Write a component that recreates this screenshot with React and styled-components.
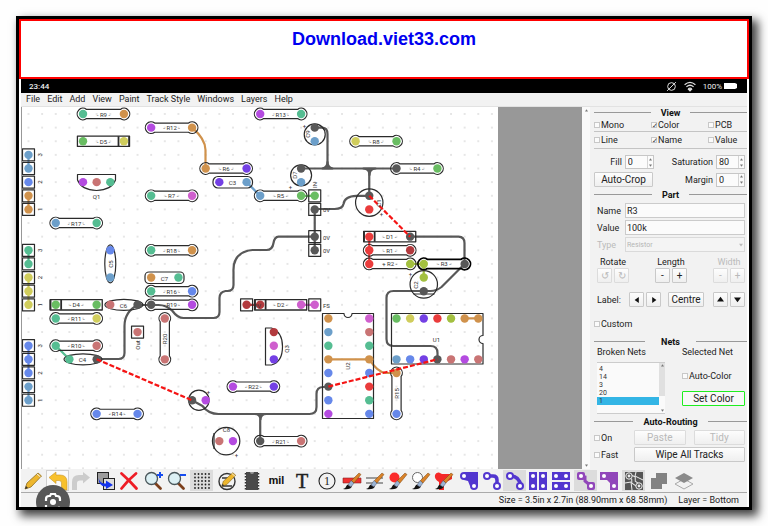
import React from "react";
import styled, { createGlobalStyle, css } from "styled-components";

const Global = createGlobalStyle`
  * { box-sizing: border-box; }
  body { margin: 0; background: #fefefe; font-family: Roboto, "Liberation Sans", sans-serif; color: #222; }
  button, input, select { font-family: inherit; color: inherit; }
`;

/* ---------- page frame ---------- */
const Page = styled.div`padding: 16px;`;
const Frame = styled.div`
  border: 3px solid #000;
  background: #fff;
  box-shadow: 5px 5px 9px 1px rgba(0, 0, 0, 0.75);
`;
const Banner = styled.header`
  height: 60px;
  padding-top: 7px;
  border: 2px solid #f00;
  text-align: center;
`;
const Title = styled.h1`
  margin: 0;
  font: bold 18px/22px "Liberation Sans", Arial, sans-serif;
  color: #0000f0;
`;
const Screen = styled.main`
  position: relative;
  overflow: hidden;
  margin: 0 2px;
  background: #f2f2f2;
`;
const StatusBar = styled.div`
  display: flex;
  align-items: center;
  gap: 7px;
  height: 14px;
  padding: 0 10px 0 8px;
  background: #000;
  color: #eee;
  font-size: 8px;
  font-weight: 500;
`;
const Clock = styled.span`margin-right: auto;`;
const Battery = styled.span`
  display: flex;
  align-items: center;
  gap: 2px;
  font-weight: 400;
`;
const MenuBar = styled.nav`
  display: flex;
  align-items: center;
  gap: 7px;
  height: 14px;
  padding: 0 5px;
  border-bottom: 1px solid #e2e2e2;
`;
const MenuItem = styled.button`
  padding: 0;
  border: 0;
  background: none;
  font-size: 9px;
  line-height: 13px;
`;
const Workspace = styled.div`
  display: grid;
  grid-template-columns: minmax(0, 1fr) 8px 157px;
`;
const BoardArea = styled.section`
  display: flex;
  overflow: hidden;
  padding-left: 1px;
  background: #989898;
`;
const Board = styled.svg`
  flex: none;
  display: block;
  background: #fff;
`;
const ScrollTrack = styled.div`
  display: flex;
  flex-direction: column;
  justify-content: space-between;
  align-items: center;
  padding: 2px 0;
  background: #fafafa;
`;

/* ---------- side panel ---------- */
const Panel = styled.aside`
  padding: 0 0 7px 4px;
  font-size: 9px;
`;
const Heading = styled.h2`
  display: flex;
  align-items: center;
  gap: ${(p) => p.$gap || 10}px;
  height: 11px;
  margin: 0;
  font-size: 9px;
  font-weight: 700;
  color: #111;
  &::before, &::after { content: ""; flex: 1; border-top: 1px solid #999; }
`;
const CheckRow = styled.div`
  display: grid;
  grid-template-columns: 57px 57px 1fr;
  align-items: center;
  height: ${(p) => p.$h}px;
  border-bottom: 1px solid #c4c4c4;
`;
const CheckLabel = styled.label`
  display: flex;
  align-items: center;
  gap: 1px;
  line-height: 12px;
`;
const CheckBox = styled.input.attrs({ type: "checkbox" })`
  appearance: none;
  display: grid;
  place-items: center;
  width: 6px;
  height: 6px;
  margin: 0;
  border: 1px solid #c8c8c8;
  background: #fbfbfb;
  &:checked::after { content: "✓"; font: bold 7px/6px "DejaVu Sans", sans-serif; color: #333; }
`;
const Row = styled.div`
  display: flex;
  align-items: center;
  justify-content: ${(p) => p.$justify || "space-between"};
  gap: ${(p) => p.$gap || 0}px;
  margin-top: ${(p) => p.$top || 0}px;
  padding-right: 2px;
`;
const SpinLabel = styled.label`
  display: flex;
  align-items: center;
  gap: 3px;
`;
const SpinBox = styled.span`
  display: flex;
  width: 29px;
  height: 14px;
  border: 1px solid #c6c6c6;
  background: #fbfbfb;
`;
const SpinInput = styled.input`
  flex: 1;
  min-width: 0;
  padding: 0 2px;
  border: 0;
  background: none;
  font-size: 9px;
`;
const SpinArrows = styled.span`
  display: flex;
  flex-direction: column;
  justify-content: space-around;
  align-items: center;
  width: 6px;
  border-left: 1px solid #d5d5d5;
`;
const Button = styled.button`
  display: grid;
  place-items: center;
  height: 15px;
  width: ${(p) => p.$w}px;
  padding: 0;
  border: 1px solid #c9c9c9;
  border-radius: 1px;
  background: linear-gradient(#fdfdfd, #efefef);
  font-size: 10px;
  line-height: 12px;
  color: #222;
  &:disabled { color: #b9b9b9; border-color: #dcdcdc; }
  ${(p) => p.$net && css`border-color: #1fee1f; background: #f8f8f8;`}
`;
const Field = styled.label`
  display: grid;
  grid-template-columns: 28px 1fr;
  align-items: center;
  margin-top: ${(p) => p.$top || 2}px;
  padding: 0 2px 0 3px;
  color: ${(p) => (p.$off ? "#bbb" : "inherit")};
`;
const fieldBox = css`
  width: 100%;
  height: 15px;
  padding: 0 1px;
  border: 1px solid #cbcbcb;
  background: #fbfbfb;
`;
const TextInput = styled.input`${fieldBox} font-size: 9px;`;
const SelectBox = styled.span`
  ${fieldBox}
  display: flex;
  align-items: center;
  background: #f4f4f4;
  border-color: #dadada;
`;
const TypeSelect = styled.select`
  appearance: none;
  flex: 1;
  border: 0;
  background: none;
  font-size: 7px;
  opacity: 1;
  &:disabled { color: #b5b5b5; opacity: 1; }
`;
const ToolGroups = styled.div`
  display: grid;
  grid-template-columns: 32px 32px 32px;
  justify-content: space-between;
  margin-top: 5px;
  padding: 0 2px 0 3px;
`;
const PairGroup = styled.div`
  display: grid;
  grid-template-columns: 15px 15px;
  column-gap: 2px;
  text-align: center;
  color: ${(p) => (p.$off ? "#bbb" : "inherit")};
`;
const PairTitle = styled.span`
  grid-column: 1 / -1;
  height: 11px;
  line-height: 11px;
`;
const LabelText = styled.span`flex: 1; padding-left: 3px;`;
const ButtonPair = styled.span`display: flex; gap: 2px; margin-right: ${(p) => p.$mr || 0}px;`;
const Spacer = styled.div`height: ${(p) => p.$h}px;`;
const NetsGrid = styled.div`
  display: grid;
  grid-template-columns: 68px 63px;
  justify-content: space-between;
  padding: 0 2px 0 3px;
`;
const NetTitle = styled.label`
  display: block;
  height: 11px;
  line-height: 11px;
  white-space: nowrap;
`;
const ListFrame = styled.div`
  display: flex;
  height: 52px;
  margin-top: 4px;
  border-top: 1px solid #ccc;
  border-bottom: 1px solid #ccc;
  background: #fafafa;
`;
const NetList = styled.select`
  appearance: none;
  flex: 1;
  min-width: 0;
  height: 50px;
  padding: 2px 0 0;
  border: 0;
  outline: 0;
  overflow: hidden;
  background: none;
  font-size: 7px;
  & option { min-height: 8px; padding: 0 2px; font-size: 7px; line-height: 8px; color: #333; }
  & option:checked { background: linear-gradient(#33b5e5, #33b5e5); }
`;
const ListScroll = styled.div`
  display: flex;
  flex-direction: column;
  justify-content: space-between;
  align-items: center;
  width: 6px;
  padding: 1px 0;
  background: linear-gradient(#e0e0e0 66%, #fafafa 66%);
`;
const NetActions = styled.div`
  display: flex;
  flex-direction: column;
  gap: 9px;
  padding-top: 12px;
`;
const RouteGrid = styled.div`
  display: grid;
  grid-template-columns: 40px 1fr 1fr;
  align-items: center;
  row-gap: 2px;
  margin-top: 3px;
  padding-right: 2px;
  & > button:nth-of-type(1) { margin-right: 4px; }
  & > button:nth-of-type(2) { margin-left: 4px; }
  & > button:nth-of-type(3) { grid-column: span 2; }
`;

/* ---------- bottom bars ---------- */
const Toolbar = styled.div`
  display: flex;
  gap: 2px;
  padding: 1px 0;
  border-bottom: 1px solid #aaa;
`;
const ToolSet = styled.div`display: flex;`;
const Tool = styled.button`
  display: grid;
  place-items: center;
  width: 23px;
  height: 21px;
  padding: 0;
  border: 0;
  background: ${(p) => (p.$on ? "#dcdcdc" : "none")};
  font-size: 11px;
  font-weight: 700;
  color: #111;
  ${(p) => p.$hover && css`background: #fafafa; box-shadow: inset 0 0 0 1px #d0d0d0;`}
`;
const Footer = styled.footer`
  display: flex;
  justify-content: flex-end;
  align-items: center;
  gap: 11px;
  height: 14px;
  padding-right: 8px;
  font-size: 9px;
`;
const LensButton = styled.button`
  position: absolute;
  left: 15px;
  bottom: -12px;
  display: grid;
  place-items: center;
  width: 34px;
  height: 34px;
  padding: 0;
  border: 0;
  border-radius: 50%;
  background: #575757;
`;

/* ---------- board drawing ---------- */
const PITCH = 13.63;
const C = {
  g: "#55bd92", o: "#d0924c", p: "#b44be0", l: "#69bd62", y: "#d0cd5c", b: "#6c9fca",
  u: "#6688ea", r: "#c97474", m: "#cf5fce", k: "#585858", v: "#7440e4", R: "#ea3c3c",
  d: "#b23a3e", e: "#a3c040",
};
const X = (i) => i * PITCH;
const LINE = "#2b2b2b";

const Pad = ({ i, j, c }) => <circle cx={X(i)} cy={X(j)} r="4.2" fill={C[c]} />;
const Tag = ({ x, y, children, turn }) => (
  <text x={x} y={y} fontSize="6" fill="#333" textAnchor="middle" dominantBaseline="central"
    transform={turn ? `rotate(-90 ${x} ${y})` : undefined}>{children}</text>
);
const Pill = ({ i, j, name, a, b, up, bold }) => {
  const w = X(3);
  return (
    <g>
      <g transform={`translate(${X(i)} ${X(j)})${up ? " rotate(90)" : ""}`}>
        <path d={`M3.5-4.6H${w - 3.5}A5.8 5.8 0 1 1 ${w - 3.5} 4.6H3.5A5.8 5.8 0 1 1 3.5-4.6Z`}
          fill="none" stroke={bold ? "#000" : LINE} strokeWidth={bold ? 1.8 : 1.2} />
        <circle r="4.2" fill={C[a]} />
        <circle cx={w} r="4.2" fill={C[b]} />
      </g>
      {up ? <Tag x={X(i)} y={X(j) + w / 2} turn>{name}</Tag>
        : <Tag x={X(i) + w / 2} y={X(j)}>{`${name === "R2" ? "+" : "-"} ${name} -`}</Tag>}
    </g>
  );
};
const Diode = ({ i, j, name, a, b, right }) => (
  <g stroke={LINE} fill="none">
    <rect x={X(i) - 5.6} y={X(j) - 5.2} width={X(3) + 11.2} height="10.4" strokeWidth="1.3" />
    <path d={right ? `M${X(i + 3) - 5.4} ${X(j) - 5}v10M${X(i + 3) + 5.2} ${X(j) - 5}v10`
      : `M${X(i) + 5.4} ${X(j) - 5}v10M${X(i) - 5.2} ${X(j) - 5}v10`} strokeWidth="1.8" />
    <g stroke="none">
      <Pad i={i} j={j} c={a} /><Pad i={i + 3} j={j} c={b} />
      <Tag x={X(i + 1.5)} y={X(j)}>{`- ${name} -`}</Tag>
    </g>
  </g>
);
const SquarePad = ({ i, j, c }) => (
  <g>
    <rect x={X(i) - 6} y={X(j) - 6} width="12" height="12" fill="none" stroke={LINE} strokeWidth="1.2" />
    <Pad i={i} j={j} c={c} />
  </g>
);
const Header5 = ({ j, colors }) => (
  <g>
    {colors.split("").map((c, n) => <SquarePad key={n} i={0} j={j + n} c={c} />)}
    {["3", "2", "1"].map((t, n) => <Tag key={t} x={11} y={X(j + n * 2)} turn>{t}</Tag>)}
  </g>
);

const PILLS = [
  [4, 0, "R9", "g", "o"], [9, 1, "R12", "p", "o"], [9, 6, "R7", "g", "m"], [2, 8, "R17", "b", "g"],
  [17, 0, "R13", "p", "g"], [24, 2, "R8", "y", "l"], [13, 4, "R6", "o", "v"], [17, 6, "R5", "b", "l"],
  [27, 4, "R4", "k", "l"], [9, 10, "R18", "g", "o"], [9, 13, "R16", "g", "u"], [9, 14, "R19", "k", "p"],
  [2, 15, "R11", "g", "y"], [2, 17, "R10", "g", "r"], [5, 22, "R14", "u", "u"], [15, 20, "R22", "p", "v"],
  [17, 24, "R21", "k", "r"], [25, 10, "R1", "R", "d"], [25, 11, "R2", "R", "e"],
];
const CIRCLES = [[21, 1.5, 10.5], [20, 4.5, 10.5], [25, 6.5, 13.7], [29, 12.5, 13.7], [12.5, 21, 10.2], [14.5, 24, 13.7]];
const LOOSE_PADS = [
  [4, 5, "p"], [5, 5, "r"], [6, 5, "g"], [21, 1, "k"], [21, 2, "b"], [20, 4, "k"], [20, 5, "b"], [14, 5, "v"],
  [16, 5, "b"], [25, 6, "k"], [25, 7, "R"], [6, 10, "u"], [6, 12, "b"], [9, 12, "o"], [11, 12, "g"],
  [6, 14, "r"], [8, 14, "k"], [3, 18, "g"], [5, 18, "k"], [12, 21, "k"], [13, 21, "p"], [14, 24, "r"],
  [15, 24, "p"], [29, 12, "e"], [29, 13, "k"], [18, 16, "d"], [18, 17, "m"], [18, 18, "v"],
];
const SQUARES = [[21, 6, "l"], [21, 7, "k"], [21, 9, "k"], [21, 10, "k"], [8, 16, "r"], [16, 14, "d"], [21, 14, "m"]];
const P = (i, j) => `${X(i)} ${X(j)}`;
const TRACKS = [
  ["k", `M${P(21, 1)}H294Q299 14 299 20V${X(4)}M${P(20, 4)}H${X(27)}M${P(25, 4)}V${X(6)}H328Q316 82 315 90Q314 95 306 95H${X(21)}V${X(10)}`],
  ["k", `M294 54.500Q299 53 299 48Q299 53 304 54.500ZM335 54.500Q341 55 341 61Q341 55 347 54.500Z`],
  ["k", `M${P(21, 9)}H250Q246 123 245 129Q244 136 238 136H224Q204 138 205 158V171Q205 177 199 177H197Q191 178 191 184V198Q191 204 185 204H155Q149 204 144 197Q138 191 130 191H${X(8)}Q96 198 96 212V239Q96 245 90 245H${X(5)}`],
  ["k", `M${P(28, 9)}H430Q436 123 436 129V${X(11)}L413 173Q408 177 402 177H365Q358 177 358 184V225Q358 232 365 232H402Q409 232 409 239V${X(18)}`],
  ["k", `M${P(12, 21)}L174 292Q180 300 190 300H281Q288 300 288 293V280Q288 273 295 273H${X(22)}M${P(17, 24)}V300M226 300Q232 300 232 306Q232 300 238 300Z`],
  ["o", `M${P(12, 1)}Q177 25 177 36V${X(4)}M${P(22, 18)}H${X(25)}Q349 258 357 259H${X(27)}M${P(32, 15)}H${X(33)}`],
  ["b", `M${P(16, 5)}L${P(17, 6)}M${P(0, 3)}V${X(4)}`],
  ["l", `M${P(20, 6)}H${X(21)}`],
  ["o", `M${P(0, 6)}V${X(7)}`],
  ["g", `M${P(2, 17)}L${P(3, 18)}M${P(0, 10)}V${X(11)}`],
  ["y", `M${P(0, 12)}V${X(14)}`],
  ["u", `M${P(0, 17)}V${X(19)}`],
  ["b", `M${P(0, 20)}V${X(21)}`],
  ["e", `M${P(28, 11)}H${X(29)}V${X(12)}`],
  ["R", `M${P(25, 9)}V${X(11)}`],
  ["m", `M${P(20, 14)}H${X(21)}`],
  ["d", `M${P(16, 14)}H${X(17)}`],
];

const Circuit = () => (
  <Board width="476" height="362" viewBox="0 0 476 362" role="img" aria-label="Circuit board">
    <defs>
      <pattern id="dots" width={PITCH} height={PITCH} patternUnits="userSpaceOnUse" x="-1" y="-1">
        <circle cx="1" cy="1" r="0.7" fill="#bdbdbd" />
      </pattern>
    </defs>
    <g transform="translate(6.5 7)" strokeLinejoin="round">
      <rect x="-3" y="-3" width="472" height="358" fill="url(#dots)" />
      {TRACKS.map(([c, d], n) => <path key={n} d={d} fill="none" stroke={C[c]} strokeWidth="2.2" strokeLinecap="round" />)}
      {PILLS.map(([i, j, name, a, b]) => <Pill key={name} i={i} j={j} name={name} a={a} b={b} />)}
      <Pill i={29} j={11} name="R3" a="e" b="k" bold />
      <Pill i={10} j={15} name="R20" a="r" b="r" up />
      <Pill i={27} j={19} name="R15" a="o" b="u" up />
      <Diode i={4} j={2} name="D5" a="l" b="y" right />
      <Diode i={2} j={14} name="D4" a="l" b="l" />
      <Diode i={25} j={9} name="D1" a="R" b="k" />
      <Diode i={17} j={14} name="D2" a="d" b="m" />
      <Header5 j={3} colors="bbuoo" />
      <Header5 j={10} colors="ggyyy" />
      <Header5 j={17} colors="uuubb" />
      <g fill="none" stroke={LINE} strokeWidth="1.2">
        {CIRCLES.map(([i, j, r]) => <circle key={`${i}-${j}`} cx={X(i)} cy={X(j)} r={r} />)}
        <path d="M49 60.500H87V66Q83 76 68 76.500Q53 76 49 66Z" />
        <path d="M237 214H243Q254 218 254 232.500Q254 248 243 251H237Z" />
        <rect x="184.500" y="62.500" width="39.500" height="11.500" rx="5" />
        <rect x="116.500" y="158" width="39" height="11.500" rx="4" />
        <ellipse cx={X(6)} cy={X(11)} rx="5.500" ry="19" />
        <ellipse cx={X(7)} cy={X(14)} rx="19" ry="5.500" />
        <ellipse cx={X(4)} cy={X(18)} rx="19" ry="5.500" />
        <path d="M294 199.500H315.500A4 4 0 0 0 323.500 199.500H345V304.500H294Z" />
        <path d="M363 199.500H454.500V221.500A4 4 0 0 0 454.500 229.500V250H363Z" />
        <path d="M385 180H406M185.500 319V335" />
      </g>
      {SQUARES.map(([i, j, c]) => <SquarePad key={`${i}-${j}`} i={i} j={j} c={c} />)}
      {LOOSE_PADS.map(([i, j, c]) => <Pad key={`${i}-${j}`} i={i} j={j} c={c} />)}
      {"obgoukup".split("").map((c, n) => <Pad key={n} i={22} j={15 + n} c={c} />)}
      {"mrgouRgu".split("").map((c, n) => <Pad key={n} i={25} j={15 + n} c={c} />)}
      {"lyvReoo".split("").map((c, n) => <Pad key={n} i={27 + n} j={15} c={c} />)}
      {"buvkrpr".split("").map((c, n) => <Pad key={n} i={27 + n} j={18} c={c} />)}
      <path d={`M${P(25, 6)}L${P(28, 9)}M${P(5, 18)}L${P(12, 21)}M${P(22, 20)}L${P(30, 18)}`}
        stroke="#f51414" strokeWidth="2.200" strokeDasharray="5 2" fill="none" />
      <Tag x={68} y={82}>Q1</Tag>
      <Tag x={204} y={68}>C3</Tag>
      <Tag x={136} y={164}>C7</Tag>
      <Tag x={95} y={191}>C6</Tag>
      <Tag x={54} y={245}>C4</Tag>
      <Tag x={198} y={315}>C8</Tag>
      <Tag x={408} y={225}>U1</Tag>
      <Tag x={298} y={95}>0V</Tag>
      <Tag x={298} y={123}>0V</Tag>
      <Tag x={298} y={136}>0V</Tag>
      <Tag x={298} y={191}>FS</Tag>
      <Tag x={229} y={191}>9V</Tag>
      <Tag x={82} y={150} turn>C5</Tag>
      <Tag x={109} y={231} turn>Out</Tag>
      <Tag x={258} y={235} turn>Q3</Tag>
      <Tag x={319} y={252} turn>U2</Tag>
      <Tag x={387} y={171} turn>C2</Tag>
      <Tag x={279} y={20} turn>C9</Tag>
      <Tag x={266} y={61} turn>D7</Tag>
      <Tag x={286} y={71} turn>IN</Tag>
      <Tag x={350} y={89} turn>C1</Tag>
      <Tag x={276} y={11}>+</Tag><Tag x={262} y={72}>+</Tag><Tag x={353} y={99}>+</Tag>
      <Tag x={382} y={159}>+</Tag><Tag x={180} y={277}>+</Tag><Tag x={208} y={340}>+</Tag>
    </g>
  </Board>
);

/* ---------- icons ---------- */
const Svg = ({ children, size = 20 }) => (
  <svg width={size} height={size} viewBox="0 0 20 20" fill="none" aria-hidden="true">{children}</svg>
);
const Tri = ({ dir, size = 5, color = "#777" }) => {
  const d = { up: "M0 8L5 1L10 8Z", down: "M0 2L5 9L10 2Z", left: "M8 0L1 5L8 10Z", right: "M2 0L9 5L2 10Z" }[dir];
  return <svg width={size} height={size} viewBox="0 0 10 10" aria-hidden="true"><path d={d} fill={color} /></svg>;
};
const Brush = () => (
  <g>
    <path d="M1 18Q4 17 5 14Q9 12 10 15Q9 19 1 18Z" fill="#111" />
    <path d="M6 14L9 9.500L12 12L9 16Z" fill="#9ab4d4" stroke="#556" strokeWidth=".5" />
    <path d="M9.500 9.500L17 2L19 3.500L12 12Z" fill="#d98228" stroke="#7a4510" strokeWidth=".5" />
  </g>
);
const Pencil = () => (
  <g>
    <path d="M2 18L4 12L15 2L18.500 5L8 16Z" fill="#edb62e" stroke="#8e6d20" strokeWidth=".8" />
    <path d="M2 18L3 15L5 17Z" fill="#333" />
    <path d="M14 3L17.500 6" stroke="#eee" />
  </g>
);
const Lens = ({ plus }) => (
  <g>
    <path d="M10.500 11.500L16.500 17.500" stroke="#7c3f1c" strokeWidth="2.800" strokeLinecap="round" />
    <circle cx="7.500" cy="7.500" r="6" fill="#dcf0f4" stroke="#49565a" strokeWidth="1.300" />
    <path d={plus ? "M13 4H19M16 1V7" : "M13 4H19"} stroke="#164cf0" strokeWidth="2" />
  </g>
);
const Holes = ({ pts }) => pts.map(([x, y]) => <circle key={`${x}-${y}`} cx={x} cy={y} r="2" fill="#fff" />);
const V = "#5236cf";
const M = "#9146ba";
const DOT_STEPS = [3, 6.5, 10, 13.5, 17];

const ICONS = {
  pencil: <Pencil />,
  undo: <path d="M1 6.500L8 1V4H12Q19 4 19 11V19H13.500V12Q13.500 9.500 11 9.500H8V12.500Z" fill="#f8c12c" stroke="#c8962a" strokeWidth=".6" />,
  redo: <path d="M19 6.500L12 1V4H8Q1 4 1 11V19H6V12Q6 9.500 9 9.500H12V12.500Z" fill="#ccc" />,
  copy: <g stroke="#222"><rect x="1.500" y="1.500" width="11" height="11" fill="#9d9d9d" /><rect x="7.500" y="7.500" width="11" height="11" fill="#ddd" /><path d="M2.500 7Q4 13 10 12.500V9.500L17 14L10 18V15.500Q3 16 2.500 7Z" fill="#1434ee" stroke="none" /></g>,
  cross: <path d="M2.500 2.500Q10 9 17.500 17.500M17 2.500Q9 9 2.500 17.500" stroke="#ee1c25" strokeWidth="2.800" strokeLinecap="round" />,
  zoomin: <Lens plus />,
  zoomout: <Lens />,
  grid: <g fill="#222">{DOT_STEPS.map((y) => DOT_STEPS.map((x) => <circle key={`${x}-${y}`} cx={x} cy={y} r=".9" />))}</g>,
  netlist: <g><circle cx="10" cy="10.500" r="8" stroke="#333" strokeWidth="1.400" /><path d="M5 7H14L6 15H15" stroke="#333" strokeWidth="1.300" /><g transform="translate(3 0) scale(.85)"><Pencil /></g></g>,
  chip: <g><rect x="4" y="1" width="12" height="18" fill="#4a4a4a" /><path d="M3.500 2V19M16.500 2V19" stroke="#333" strokeWidth="1.500" strokeDasharray="1.500 1.500" /><path d="M8 1A2 2 0 0 0 12 1" fill="#999" /></g>,
  text: <text x="10" y="16.500" fontSize="20" fontWeight="400" textAnchor="middle" fill="#222" stroke="#222" strokeWidth=".5" fontFamily="Liberation Serif, serif">T</text>,
  one: <g><circle cx="10" cy="10" r="8" stroke="#222" strokeWidth="1.100" /><text x="10" y="14" fontSize="12" fontWeight="400" textAnchor="middle" fill="#222" fontFamily="Liberation Serif, serif">1</text></g>,
  brushTrack: <g><path d="M1 7H19V12H1Z" fill="#f03030" stroke="#822" strokeWidth=".6" /><Brush /></g>,
  brushLine: <g><path d="M1 7H18M1 12H18" stroke="#444" /><Brush /></g>,
  brushPad: <g><circle cx="6.500" cy="6.500" r="5" fill="#fb2b2b" /><Brush /></g>,
  brushClear: <g><circle cx="6.500" cy="6.500" r="5" fill="#fff" stroke="#666" /><Brush /></g>,
  brushFill: <g><path d="M1 4Q2 1 5 1.500L8 3H18V8L10 12V19H5V11Q0 8 1 4Z" fill="#f42828" /><Brush /></g>,
  fillA: <g><path d="M5 1H19V15A4 4 0 0 1 11 15L9 10L5 9A4 4 0 0 1 5 1Z" fill={V} /><Holes pts={[[5, 5], [15, 15]]} /></g>,
  routeA: <g><path d="M4 5H11Q15 5 15 9V15" stroke={V} strokeWidth="3.500" /><circle cx="5" cy="5" r="4" fill={V} /><circle cx="15" cy="15" r="4" fill={V} /><Holes pts={[[5, 5], [15, 15]]} /></g>,
  routeB: <g><path d="M4 5Q14 4 16 15" stroke={V} strokeWidth="3.500" /><circle cx="5" cy="5" r="4" fill={V} /><circle cx="15" cy="15" r="4" fill={V} /><Holes pts={[[5, 5], [15, 15]]} /></g>,
  vert: <g><path d="M1 1H9V19H1ZM11 1H19V19H11Z" fill={V} /><Holes pts={[[5, 5], [5, 15], [15, 5], [15, 15]]} /></g>,
  horiz: <g><path d="M1 1H19V9H1ZM1 11H19V19H1Z" fill={V} /><Holes pts={[[5, 5], [5, 15], [15, 5], [15, 15]]} /></g>,
  link: <g><path d="M5 5L9 6V10L15 15" stroke={M} strokeWidth="3" /><rect x="1" y="1" width="8" height="8" rx="2" fill={M} /><rect x="11" y="11" width="8" height="8" rx="2" fill={M} /><Holes pts={[[5, 5], [15, 15]]} /></g>,
  linkFill: <g><path d="M1 1H19V19H11V12L8 9H1Z" fill={M} /><Holes pts={[[5, 5], [15, 15]]} /></g>,
  isolate: <g><rect x="1" y="1" width="18" height="18" fill="#555" /><path d="M5 5L9.500 7V11L15 15" stroke="#eee" strokeWidth="4.500" /><path d="M5 5L9.500 7V11L15 15" stroke="#555" strokeWidth="2.500" /><path d="M12 1L11 5L19 9M1 12L7 11L8 19" stroke="#eee" /><circle cx="5" cy="5" r="3.200" fill="#555" stroke="#eee" /><circle cx="15" cy="15" r="3.200" fill="#555" stroke="#eee" /><circle cx="5" cy="5" r="1.400" fill="#eee" /><circle cx="15" cy="15" r="1.400" fill="#eee" /></g>,
  shape: <path d="M7 2H18V13H13V18H2V7H7Z" fill="#828282" />,
  layers: <g><path d="M1 13L10 8L19 13L10 18Z" fill="#f2f2f2" stroke="#aaa" /><path d="M1 7L10 2L19 7L10 12Z" fill="#8b8b8b" /></g>,
};
const TOOLSETS = [
  ["pencil"], ["undo", "redo"], ["copy", "cross"], ["zoomin", "zoomout"], ["grid"], ["netlist"], ["chip"],
  ["mil"], ["text"], ["one"], ["brushTrack", "brushLine", "brushPad", "brushClear", "brushFill"],
  ["fillA", "routeA", "routeB", "vert", "horiz"], ["link", "linkFill"], ["isolate"], ["shape"], ["layers"],
];
const ACTIVE = ["grid", "routeB", "link", "isolate"];

const Check = ({ label, on }) => <CheckLabel><CheckBox defaultChecked={on} />{label}</CheckLabel>;
const Spin = ({ label, value }) => (
  <SpinLabel>
    {label}
    <SpinBox>
      <SpinInput defaultValue={value} />
      <SpinArrows><Tri dir="up" size={3} /><Tri dir="down" size={3} /></SpinArrows>
    </SpinBox>
  </SpinLabel>
);

const SidePanel = () => (
  <Panel>
    <Heading>View</Heading>
    <CheckRow $h={14}><Check label="Mono" /><Check label="Color" on /><Check label="PCB" /></CheckRow>
    <CheckRow $h={17}><Check label="Line" /><Check label="Name" on /><Check label="Value" /></CheckRow>
    <Row $top={6} $justify="flex-end" $gap={18}><Spin label="Fill" value="0" /><Spin label="Saturation" value="80" /></Row>
    <Row $top={3}><Button $w={59}>Auto-Crop</Button><Spin label="Margin" value="0" /></Row>
    <Spacer $h={2} />
    <Heading>Part</Heading>
    <Field $top={3}>Name<TextInput defaultValue="R3" /></Field>
    <Field>Value<TextInput defaultValue="100k" /></Field>
    <Field $off>Type
      <SelectBox><TypeSelect disabled defaultValue="Resistor"><option>Resistor</option></TypeSelect><Tri dir="down" size={4} color="#bbb" /></SelectBox>
    </Field>
    <ToolGroups>
      <PairGroup><PairTitle>Rotate</PairTitle><Button disabled aria-label="Rotate left">↺</Button><Button disabled aria-label="Rotate right">↻</Button></PairGroup>
      <PairGroup><PairTitle>Length</PairTitle><Button>-</Button><Button>+</Button></PairGroup>
      <PairGroup $off><PairTitle>Width</PairTitle><Button disabled>-</Button><Button disabled>+</Button></PairGroup>
    </ToolGroups>
    <Row $top={9}>
      <LabelText>Label:</LabelText>
      <ButtonPair $mr={7}>
        <Button $w={15} aria-label="Left"><Tri dir="left" size={6} color="#111" /></Button>
        <Button $w={15} aria-label="Right"><Tri dir="right" size={6} color="#111" /></Button>
      </ButtonPair>
      <ButtonPair $mr={9}><Button $w={36}>Centre</Button></ButtonPair>
      <ButtonPair>
        <Button $w={15} aria-label="Up"><Tri dir="up" size={7} color="#111" /></Button>
        <Button $w={15} aria-label="Down"><Tri dir="down" size={7} color="#111" /></Button>
      </ButtonPair>
    </Row>
    <Row $top={11}><Check label="Custom" /></Row>
    <Spacer $h={6} />
    <Heading $gap={16}>Nets</Heading>
    <NetsGrid>
      <div>
        <NetTitle htmlFor="nets">Broken Nets</NetTitle>
        <ListFrame>
          <NetList id="nets" size={5} defaultValue="1">
            {["4", "14", "3", "20", "1"].map((n) => <option key={n}>{n}</option>)}
          </NetList>
          <ListScroll><Tri dir="up" size={3} /><Tri dir="down" size={3} /></ListScroll>
        </ListFrame>
      </div>
      <div>
        <NetTitle as="div">Selected Net</NetTitle>
        <NetActions><Check label="Auto-Color" /><Button $net>Set Color</Button></NetActions>
      </div>
    </NetsGrid>
    <Spacer $h={2} />
    <Heading>Auto-Routing</Heading>
    <RouteGrid>
      <Check label="On" /><Button disabled>Paste</Button><Button disabled>Tidy</Button>
      <Check label="Fast" /><Button>Wipe All Tracks</Button>
    </RouteGrid>
  </Panel>
);

export default function App() {
  return (
    <Page>
      <Global />
      <Frame>
        <Banner><Title>Download.viet33.com</Title></Banner>
        <Screen>
          <StatusBar>
            <Clock>23:44</Clock>
            <Svg size={11}><g stroke="#ddd" strokeWidth="1.800"><circle cx="10" cy="10" r="7" /><path d="M2 18L18 2" /></g></Svg>
            <Svg size={12}><g stroke="#ddd" strokeWidth="2"><path d="M1 8Q10 0 19 8M4 11.500Q10 6 16 11.500M7 15Q10 12 13 15" /><path d="M8 16H12L10 18Z" fill="#ddd" /></g></Svg>
            <Battery>100%<svg width="13" height="6" viewBox="0 0 13 6" aria-hidden="true"><path d="M0 0H11L13 1V5L11 6H0Z" fill="#fff" /></svg></Battery>
          </StatusBar>
          <MenuBar>
            {["File", "Edit", "Add", "View", "Paint", "Track Style", "Windows", "Layers", "Help"].map((m) => <MenuItem key={m}>{m}</MenuItem>)}
          </MenuBar>
          <Workspace>
            <BoardArea><Circuit /></BoardArea>
            <ScrollTrack><Tri dir="up" size={3} /><Tri dir="down" size={3} /></ScrollTrack>
            <SidePanel />
          </Workspace>
          <Toolbar>
            {TOOLSETS.map((set) => (
              <ToolSet key={set[0]}>
                {set.map((t) => (
                  <Tool key={t} aria-label={t} $on={ACTIVE.includes(t)} $hover={t === "undo"}>
                    {ICONS[t] ? <Svg>{ICONS[t]}</Svg> : t}
                  </Tool>
                ))}
              </ToolSet>
            ))}
          </Toolbar>
          <Footer><span>Size = 3.5in x 2.7in (88.90mm x 68.58mm)</span><span>Layer = Bottom</span></Footer>
          <LensButton aria-label="Image search">
            <svg width="18" height="18" viewBox="0 0 18 18" fill="none" stroke="#fff" strokeWidth="2.200" aria-hidden="true">
              <path d="M2 8V6Q2 3 5 3H6L7 1H11L12 3H13Q16 3 16 6V8M2 12V14Q2 16 5 16H9" />
              <circle cx="9" cy="9" r="3" fill="#fff" stroke="none" /><circle cx="15" cy="15" r="1.500" fill="#fff" stroke="none" />
            </svg>
          </LensButton>
        </Screen>
      </Frame>
    </Page>
  );
}
